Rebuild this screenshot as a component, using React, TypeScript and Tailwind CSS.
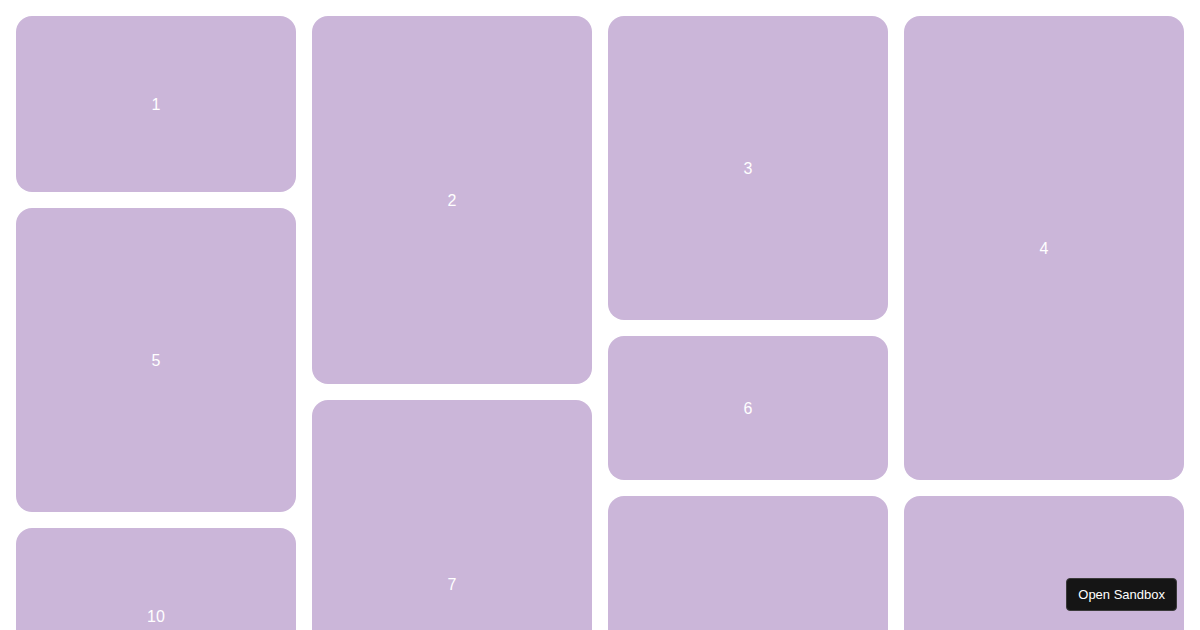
import React from 'react';

const columns: { id: number; h: number }[][] = [
    [
        { id: 1, h: 176 },
        { id: 5, h: 304 },
        { id: 10, h: 176 },
    ],
    [
        { id: 2, h: 368 },
        { id: 7, h: 368 },
    ],
    [
        { id: 3, h: 304 },
        { id: 6, h: 144 },
        { id: 8, h: 400 },
    ],
    [
        { id: 4, h: 464 },
        { id: 9, h: 400 },
    ],
];

export default function App() {
    return (
        <div className="h-[630px] overflow-hidden bg-white font-['Liberation_Sans',Arial,sans-serif]">
            <div className="flex gap-4 p-4">
                {columns.map((col, ci) => (
                    <div key={ci} className="flex w-[280px] flex-col gap-4">
                        {col.map((item) => (
                            <div
                                key={item.id}
                                className="flex shrink-0 items-center justify-center rounded-2xl bg-[#cbb6d9] pt-0.5 text-base text-white"
                                style={{ height: item.h }}
                            >
                                {item.id}
                            </div>
                        ))}
                    </div>
                ))}
            </div>
            <button className="fixed bottom-[19px] right-[23px] h-[33px] rounded border border-[#3a3a3a] bg-[#151515] px-[11px] text-[13px] text-white">
                Open Sandbox
            </button>
        </div>
    );
}
